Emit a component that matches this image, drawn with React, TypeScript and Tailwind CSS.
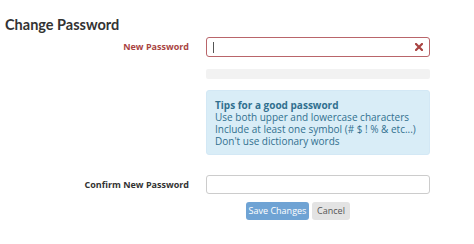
import React from "react";

export default function App() {
  return (
    <div className="w-[474px] h-[244px] bg-white text-[#333]" style={{ fontFamily: "'Open Sans', 'Liberation Sans', sans-serif" }}>
      <div className="pt-[16px] pl-[5px]">
        <h1 className="text-[14.5px] leading-[18px] font-bold text-[#333]" style={{ fontFamily: "Lato, 'Open Sans', sans-serif" }}>Change Password</h1>
      </div>
      <div className="mt-[3px] flex flex-col">
        <div className="flex items-center">
          <label className="w-[190px] pr-[1px] text-right text-[9px] font-bold text-[#a94442]">New Password</label>
          <div className="ml-[16px] w-[224px] h-[20px] border border-[#b9656a] rounded-[3px] flex items-center justify-between px-[6px]">
            <span className="w-px h-[11px] bg-[#555]"></span>
            <svg width="8" height="8" viewBox="0 0 8 8">
              <path d="M1 1 L7 7 M7 1 L1 7" stroke="#a94442" strokeWidth="2.2" strokeLinecap="square" />
            </svg>
          </div>
        </div>
        <div className="ml-[206px] mt-[12px] w-[224px] h-[10px] rounded-[2px] bg-[#f2f2f2]"></div>
        <div className="ml-[206px] mt-[11px] w-[224px] h-[65px] rounded-[3px] bg-[#d9edf7] border border-[#d3e8f5] text-[#31708f] text-[10px] leading-[12px] pl-[8px] pt-[8px]">
          <div className="font-bold">Tips for a good password</div>
          <div>Use both upper and lowercase characters</div>
          <div>Include at least one symbol (# $ ! % &amp; etc...)</div>
          <div>Don't use dictionary words</div>
        </div>
        <div className="flex items-center mt-[20px]">
          <label className="w-[190px] pr-[1px] text-right text-[9px] font-bold text-[#333]">Confirm New Password</label>
          <div className="ml-[16px] w-[224px] h-[19px] border border-[#ccc] rounded-[3px]"></div>
        </div>
        <div className="flex ml-[246px] mt-[8px] gap-[3px]">
          <button className="w-[63px] h-[18px] rounded-[3px] bg-[#6fa3d4] text-white text-[9px] leading-[18px]">Save Changes</button>
          <button className="w-[38px] h-[18px] rounded-[3px] bg-[#e3e3e3] text-[#555] text-[9px] leading-[18px]">Cancel</button>
        </div>
      </div>
    </div>
  );
}
